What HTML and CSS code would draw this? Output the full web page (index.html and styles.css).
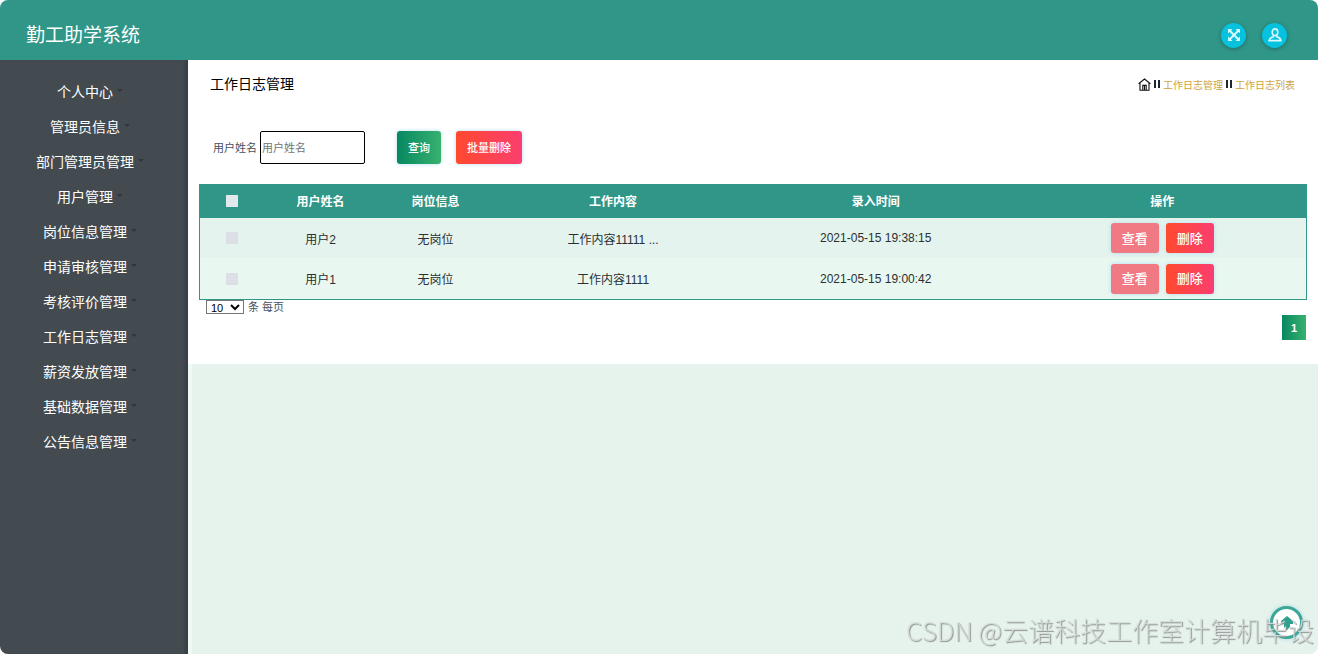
FILE: index.html
```
<!DOCTYPE html>
<html lang="zh-CN">
<head>
    <meta charset="UTF-8">
    <meta name="viewport" content="width=device-width, initial-scale=1.0">
    <title>勤工助学系统</title>
    <link rel="stylesheet" href="styles.css">
</head>
<body>
    <div class="wrapper">
        <!-- 顶部导航 -->
        <header class="navbar">
            <h1 class="brand">勤工助学系统</h1>
            <div class="nav-tools">
                <button type="button" class="nav-btn" aria-label="全屏">
                    <svg width="14" height="14" viewBox="0 0 14 14" fill="none" stroke="currentColor" stroke-width="2">
                        <path d="M2 2l10 10M12 2L2 12"/>
                        <path d="M1 5.500V1h4.500zM8.500 1H13v4.500zM13 8.500V13H8.500zM5.500 13H1V8.500z" fill="currentColor" stroke="none"/>
                    </svg>
                </button>
                <button type="button" class="nav-btn" aria-label="用户">
                    <svg width="14" height="14" viewBox="0 0 14 14" fill="none" stroke="currentColor" stroke-width="1.6">
                        <ellipse cx="7" cy="4.2" rx="2.8" ry="3.3"/>
                        <path d="M5.4 7.2v1.4C3 9.2 1.4 10.4 1 12.6h12c-.4-2.2-2-3.4-4.4-4V7.2"/>
                    </svg>
                </button>
            </div>
        </header>

        <div class="main">
            <!-- 左侧菜单 -->
            <nav class="sidebar">
                <a href="#" class="menu-item">个人中心</a>
                <a href="#" class="menu-item">管理员信息</a>
                <a href="#" class="menu-item">部门管理员管理</a>
                <a href="#" class="menu-item">用户管理</a>
                <a href="#" class="menu-item">岗位信息管理</a>
                <a href="#" class="menu-item">申请审核管理</a>
                <a href="#" class="menu-item">考核评价管理</a>
                <a href="#" class="menu-item">工作日志管理</a>
                <a href="#" class="menu-item">薪资发放管理</a>
                <a href="#" class="menu-item">基础数据管理</a>
                <a href="#" class="menu-item">公告信息管理</a>
            </nav>

            <main class="content">
                <section class="panel">
                    <div class="page-head">
                        <h2 class="page-title">工作日志管理</h2>
                        <div class="breadcrumb">
                            <a href="#" class="home" aria-label="首页">
                                <svg width="13" height="13" viewBox="0 0 13 13" fill="none" stroke="currentColor" stroke-width="1.1">
                                    <path d="M.6 5.8L6.5 1l5.900 4.800M2 5v7.300h9V5M4.800 12V7.400h3.400V12M6.500 7.400V12"/>
                                </svg>
                            </a>
                            <span class="sep"></span>
                            <a href="#">工作日志管理</a>
                            <span class="sep"></span>
                            <a href="#">工作日志列表</a>
                        </div>
                    </div>

                    <!-- 查询条件 -->
                    <form class="search">
                        <label for="username">用户姓名</label>
                        <input type="text" id="username" class="search-input" placeholder="用户姓名">
                        <button type="button" class="btn btn-green">查询</button>
                        <button type="button" class="btn btn-red">批量删除</button>
                    </form>

                    <table class="table">
                        <colgroup>
                            <col class="col-check">
                            <col class="col-name">
                            <col class="col-name">
                            <col class="col-text">
                            <col class="col-time">
                            <col class="col-action">
                        </colgroup>
                        <thead>
                            <tr>
                                <th><input type="checkbox" class="check" aria-label="全选"></th>
                                <th>用户姓名</th>
                                <th>岗位信息</th>
                                <th>工作内容</th>
                                <th>录入时间</th>
                                <th>操作</th>
                            </tr>
                        </thead>
                        <tbody>
                            <tr>
                                <td><input type="checkbox" class="check" aria-label="选择用户2"></td>
                                <td>用户2</td>
                                <td>无岗位</td>
                                <td>工作内容11111 ...</td>
                                <td>2021-05-15 19:38:15</td>
                                <td>
                                    <div class="actions">
                                        <button type="button" class="btn btn-small btn-pink">查看</button>
                                        <button type="button" class="btn btn-small btn-red">删除</button>
                                    </div>
                                </td>
                            </tr>
                            <tr>
                                <td><input type="checkbox" class="check" aria-label="选择用户1"></td>
                                <td>用户1</td>
                                <td>无岗位</td>
                                <td>工作内容1111</td>
                                <td>2021-05-15 19:00:42</td>
                                <td>
                                    <div class="actions">
                                        <button type="button" class="btn btn-small btn-pink">查看</button>
                                        <button type="button" class="btn btn-small btn-red">删除</button>
                                    </div>
                                </td>
                            </tr>
                        </tbody>
                    </table>

                    <!-- 分页 -->
                    <div class="page-size">
                        <select id="size" class="size-select">
                            <option>10</option>
                            <option>25</option>
                            <option>50</option>
                        </select>
                        <label for="size">条 每页</label>
                    </div>
                    <div class="pager">
                        <button type="button" class="page-num">1</button>
                    </div>
                </section>
            </main>
        </div>
    </div>

    <!-- 返回顶部 -->
    <button type="button" class="to-top" aria-label="返回顶部">
        <svg width="14" height="16" viewBox="0 0 14 16" fill="currentColor">
            <path d="M7 1l6 5v3h-3v3l-3 3-3-3V9H1V6z"/>
        </svg>
    </button>
    <div class="watermark">CSDN @云谱科技工作室计算机毕设</div>
</body>
</html>
```
FILE: styles.css
```
* {
    box-sizing: border-box;
}
body {
    margin: 0;
    background: #fff;
    color: #2b2f33;
    font-family: "Liberation Sans", "Noto Sans CJK SC", sans-serif;
    font-size: 12px;
}
a {
    color: inherit;
    text-decoration: none;
}
button,
input,
select {
    font-family: inherit;
}
.wrapper {
    display: flex;
    flex-direction: column;
    min-height: 100vh;
    border-radius: 8px;
    overflow: hidden;
}

/* 顶部导航 */
.navbar {
    display: flex;
    align-items: center;
    justify-content: space-between;
    height: 60px;
    padding: 10px 31px 0 26px;
    background: #309688;
}
.brand {
    margin: 0;
    padding-bottom: 3px;
    color: #fff;
    font-size: 19px;
    font-weight: normal;
}
.nav-tools {
    display: flex;
    gap: 16px;
}
.nav-btn {
    display: flex;
    align-items: center;
    justify-content: center;
    width: 25px;
    height: 25px;
    padding: 0;
    border: none;
    border-radius: 50%;
    background: #06c2de;
    color: #d8fbff;
    box-shadow: 0 1px 4px rgba(0, 0, 0, 0.3);
}

.main {
    display: flex;
    flex: 1;
}

/* 左侧菜单 */
.sidebar {
    flex: none;
    width: 188px;
    padding: 13px 8px 0 0;
    background: #434b50;
    box-shadow: inset -4px 0 3px -1px #394045;
}
.menu-item {
    display: flex;
    align-items: center;
    justify-content: center;
    gap: 4px;
    height: 35px;
    color: #fff;
    font-size: 14px;
}
.menu-item::after {
    content: "";
    border: 3px solid transparent;
    border-top-color: #30373b;
    border-bottom: none;
}

/* 右侧内容 */
.content {
    flex: 1;
    min-width: 0;
    background: #e6f3ec;
    box-shadow: inset 4px 0 0 #effaf5;
}
.panel {
    padding: 8px 11px 24px;
    background: #fff;
}
.page-head {
    display: flex;
    align-items: center;
    justify-content: space-between;
    height: 32px;
    padding: 0 12px 0 11px;
}
.page-title {
    margin: 0;
    padding-bottom: 3px;
    color: #000;
    font-size: 14px;
    font-weight: normal;
}
.breadcrumb {
    display: flex;
    align-items: center;
    gap: 3px;
    color: #d0a33c;
    font-size: 10px;
}
.home {
    display: flex;
    color: #111;
}
.sep {
    width: 6px;
    height: 8px;
    border: solid #1c2830;
    border-width: 0 2px;
}

/* 查询条件 */
.search {
    display: flex;
    align-items: center;
    margin: 31px 0 20px;
    padding-left: 14px;
    color: #455262;
    font-size: 11px;
}
.search label {
    padding-bottom: 2px;
}
.search-input {
    width: 105px;
    height: 33px;
    margin: 0 32px 0 3px;
    padding: 0 1px;
    border: 1px solid #000;
    border-radius: 2px;
    font-size: 11px;
}
.search-input::placeholder {
    color: #757575;
}
.btn {
    height: 33px;
    padding: 0 11px 2px;
    border: none;
    border-radius: 3px;
    color: #fff;
    font-size: 11px;
    font-weight: 500;
    box-shadow: 0 0 4px #b5dcf0;
}
.btn-green {
    margin-right: 15px;
    background: linear-gradient(to right, #078861, #38b16f);
}
.btn-red {
    background: linear-gradient(to right, #ff4a2e, #fb3e70);
}
.btn-pink {
    background: #f07a84;
}
.btn-small {
    height: 30px;
    font-size: 13px;
}

/* 数据表格 */
.table {
    width: 100%;
    table-layout: fixed;
    border: 1px solid #309688;
    border-spacing: 0;
    text-align: center;
}
.col-check {
    width: 5.7%;
}
.col-name {
    width: 10.4%;
}
.col-text {
    width: 21.7%;
}
.col-time {
    width: 25.8%;
}
.table th,
.table td {
    padding: 0;
}
.table th {
    height: 33px;
    padding-bottom: 2px;
    background: #309688;
    color: #fff;
}
.table td {
    height: 40px;
    background: #e4f3ed;
}
.table tbody tr:last-child td {
    height: 41px;
    background: #e8f8f0;
}
.check {
    appearance: none;
    display: block;
    width: 12px;
    height: 12px;
    margin: 0 auto;
    background: #dcdfe5;
}
.table th .check {
    background: #e2e9ed;
}
.actions {
    display: flex;
    justify-content: center;
    gap: 7px;
}

/* 分页 */
.page-size {
    display: flex;
    align-items: flex-start;
    gap: 4px;
    height: 15px;
    padding-left: 7px;
    color: #455262;
    font-size: 11px;
    line-height: 14px;
}
.size-select {
    width: 38px;
    height: 14px;
    padding: 0;
    border: 1px solid #767676;
    background: #fff;
    color: #000;
    font-size: 11px;
}
.pager {
    display: flex;
    justify-content: flex-end;
    padding-right: 1px;
}
.page-num {
    width: 24px;
    height: 25px;
    padding: 0;
    border: none;
    background: linear-gradient(to right, #078861, #38b16f);
    color: #fff;
    font-size: 11px;
    font-weight: bold;
}

/* 浮动在页面右下角 */
.to-top {
    position: fixed;
    right: 15px;
    bottom: 15px;
    display: flex;
    align-items: center;
    justify-content: center;
    width: 33px;
    height: 33px;
    padding: 0;
    border: 3px solid #3aa797;
    border-radius: 50%;
    background: #fff;
    color: #2fa08f;
    box-shadow: 0 0 4px #9fd8e4;
}
.watermark {
    position: fixed;
    right: 4px;
    bottom: 6px;
    color: rgba(214, 220, 217, 0.9);
    font-family: "Noto Sans CJK SC", sans-serif;
    font-size: 26px;
    font-weight: 300;
    text-shadow: 1px 1px 1px #8c9290;
    pointer-events: none;
}
```
